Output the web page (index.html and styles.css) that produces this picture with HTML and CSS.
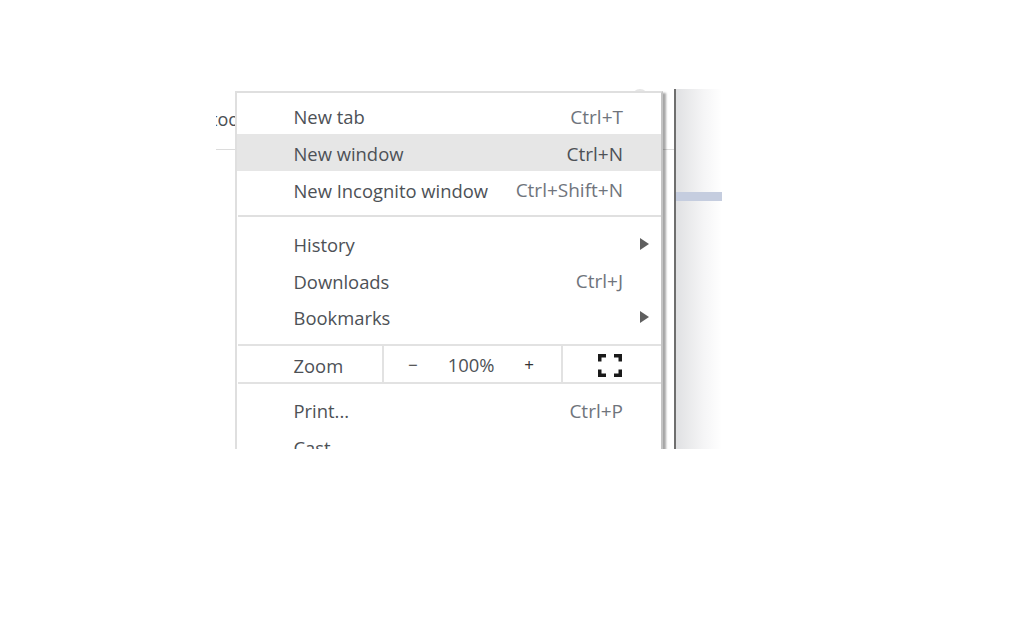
FILE: index.html
```html
<!DOCTYPE html>
<html lang="en">
<head>
    <meta charset="UTF-8">
    <title>Chrome menu</title>
    <link rel="stylesheet" href="styles.css">
</head>
<body>
    <div class="shot">
        <div class="toolbar">
            <div class="toolbar-text"><span>too</span></div>
            <div class="window-edge">
                <div class="edge-bar"></div>
            </div>
        </div>

        <div class="toolbar-dot"></div>

        <div class="menu">
            <div class="menu-item"><span>New tab</span><span class="shortcut">Ctrl+T</span></div>
            <div class="menu-item hover"><span>New window</span><span class="shortcut">Ctrl+N</span></div>
            <div class="menu-item"><span>New Incognito window</span><span class="shortcut">Ctrl+Shift+N</span></div>
            <div class="separator"></div>
            <div class="menu-item"><span>History</span><span class="arrow"></span></div>
            <div class="menu-item"><span>Downloads</span><span class="shortcut">Ctrl+J</span></div>
            <div class="menu-item"><span>Bookmarks</span><span class="arrow"></span></div>
            <div class="zoom-row">
                <div class="zoom-label">Zoom</div>
                <div class="zoom-controls">
                    <span class="zoom-sign">&minus;</span>
                    <span>100%</span>
                    <span class="zoom-sign">+</span>
                </div>
                <div class="zoom-full">
                    <svg width="24" height="23" viewBox="0 0 24 23" fill="none" stroke="#1a1a1a" stroke-width="3.500">
                        <path d="M1.750 7.500V1.750H8M16 1.750H22.250V7.500M1.750 15.500V21.250H8M16 21.250H22.250V15.500"/>
                    </svg>
                </div>
            </div>
            <div class="menu-item"><span>Print...</span><span class="shortcut">Ctrl+P</span></div>
            <div class="menu-item"><span>Cast...</span></div>
        </div>
    </div>
</body>
</html>
```

FILE: styles.css
```css
* {
    margin: 0;
    padding: 0;
    box-sizing: border-box;
}

body {
    width: 1020px;
    height: 638px;
    padding: 89px 0 0 216px;
    background-color: #fff;
    font-family: "Open Sans", "Noto Sans", sans-serif;
    overflow: hidden;
}

.shot {
    position: relative;
    width: 506px;
    height: 360px;
    overflow: hidden;
}

.toolbar {
    display: flex;
    height: 100%;
}

.toolbar-text {
    width: 458px;
    height: 61px;
    border-bottom: 1px solid #dcdcdc;
    font-size: 18px;
    line-height: 60px;
    color: #4a4f55;
}

.toolbar-text span {
    margin-left: -5px;
}

.toolbar-dot {
    position: absolute;
    left: 416px;
    top: 0;
    width: 16px;
    height: 16px;
    border-radius: 50%;
    background-color: #e6e6e6;
}

.window-edge {
    width: 48px;
    padding-top: 103px;
    border-left: 2px solid #6e6e6e;
    background: linear-gradient(to right, #e0e1e3, #f5f5f6 60%, #fff);
}

.edge-bar {
    height: 9px;
    background-color: #c5cddf;
}

.menu {
    position: absolute;
    left: 19px;
    top: 2px;
    width: 428px;
    padding-top: 4px;
    background-color: #fff;
    border: 2px solid #dfdfdf;
    border-right-color: #c4c4c4;
    box-shadow: 3px 2px 2px rgba(0, 0, 0, 0.35);
    font-size: 18.400px;
    color: #4d5156;
}

.menu-item {
    display: flex;
    justify-content: space-between;
    align-items: center;
    height: 36.800px;
    padding: 3px 38px 0 56.500px;
    white-space: nowrap;
}

.menu-item.hover {
    background-color: #e6e6e6;
}

.shortcut {
    font-size: 19px;
    color: #6f747c;
}

.hover .shortcut {
    color: #4d5156;
}

.arrow {
    width: 0;
    height: 0;
    margin-right: -26px;
    margin-top: -1px;
    border-left: 9px solid #5f5f5f;
    border-top: 6px solid transparent;
    border-bottom: 6px solid transparent;
}

.separator {
    height: 2px;
    margin: 8px 0 7px 1px;
    background-color: #e0e0e0;
}

.zoom-row {
    display: flex;
    height: 40px;
    margin: 9px 0 7px 1px;
    border-top: 2px solid #e2e2e2;
    border-bottom: 2px solid #e2e2e2;
}

.zoom-label {
    width: 144px;
    padding-left: 55.500px;
    line-height: 40px;
}

.zoom-controls {
    display: flex;
    justify-content: space-between;
    align-items: center;
    width: 181px;
    padding: 2px 27px 0 24px;
    border-left: 2px solid #e2e2e2;
    border-right: 2px solid #e2e2e2;
}

.zoom-sign {
    font-size: 17px;
    color: #333;
}

.zoom-full {
    display: flex;
    justify-content: center;
    align-items: center;
    width: 96px;
    padding: 3px 2px 0 0;
}
```
